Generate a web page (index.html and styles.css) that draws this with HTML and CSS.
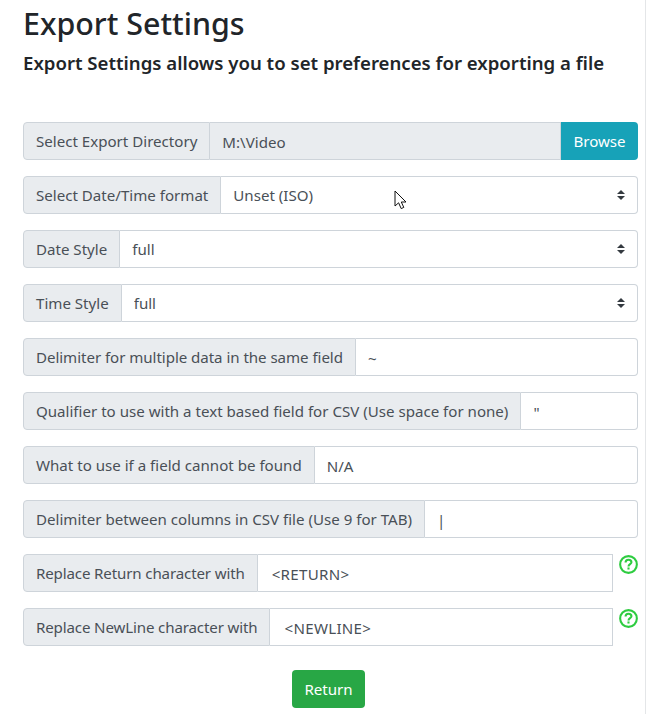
FILE: index.html
```html
<!DOCTYPE html>
<html lang="en">
<head>
    <meta charset="UTF-8">
    <meta name="viewport" content="width=device-width, initial-scale=1.0">
    <title>Export Settings</title>
    <link rel="stylesheet" href="styles.css">
</head>
<body>
    <div class="page">
        <h1>Export Settings</h1>
        <h2>Export Settings allows you to set preferences for exporting a file</h2>

        <form class="settings">
            <div class="group">
                <label class="addon">Select Export Directory</label>
                <input class="field field-readonly" type="text" value="M:\Video" readonly>
                <button class="browse" type="button">Browse</button>
            </div>
            <div class="group">
                <label class="addon">Select Date/Time format</label>
                <select class="field select"><option>Unset (ISO)</option></select>
            </div>
            <div class="group">
                <label class="addon">Date Style</label>
                <select class="field select"><option>full</option></select>
            </div>
            <div class="group">
                <label class="addon">Time Style</label>
                <select class="field select"><option>full</option></select>
            </div>
            <div class="group">
                <label class="addon addon-snug">Delimiter for multiple data in the same field</label>
                <input class="field" type="text" value="~">
            </div>
            <div class="group">
                <label class="addon">Qualifier to use with a text based field for CSV (Use space for none)</label>
                <input class="field" type="text" value="&quot;">
            </div>
            <div class="group">
                <label class="addon">What to use if a field cannot be found</label>
                <input class="field" type="text" value="N/A">
            </div>
            <div class="group">
                <label class="addon">Delimiter between columns in CSV file (Use 9 for TAB)</label>
                <input class="field" type="text" value="|">
            </div>
            <div class="group">
                <label class="addon addon-tight">Replace Return character with</label>
                <input class="field field-square field-spaced" type="text" value="&lt;RETURN&gt;">
                <svg class="help" viewBox="0 0 20 20">
                    <circle cx="10" cy="10" r="8.8" fill="none" stroke="#2ecc40" stroke-width="2.2"/>
                    <path d="M6.9 7.9C6.9 6.1 8.3 5 10 5S13.1 6.1 13.1 7.7C13.1 9.6 10 9.7 10 12" fill="none" stroke="#2ecc40" stroke-width="2.2"/>
                    <rect x="8.9" y="13.1" width="2.2" height="2.2" fill="#2ecc40"/>
                </svg>
            </div>
            <div class="group">
                <label class="addon addon-tight">Replace NewLine character with</label>
                <input class="field field-square field-spaced" type="text" value="&lt;NEWLINE&gt;">
                <svg class="help" viewBox="0 0 20 20">
                    <circle cx="10" cy="10" r="8.8" fill="none" stroke="#2ecc40" stroke-width="2.2"/>
                    <path d="M6.9 7.9C6.9 6.1 8.3 5 10 5S13.1 6.1 13.1 7.7C13.1 9.6 10 9.7 10 12" fill="none" stroke="#2ecc40" stroke-width="2.2"/>
                    <rect x="8.9" y="13.1" width="2.2" height="2.2" fill="#2ecc40"/>
                </svg>
            </div>
            <div class="actions">
                <button class="return" type="button">Return</button>
            </div>
        </form>
    </div>

    <svg class="pointer" viewBox="0 0 13 20">
        <path d="M1 1V16L4.6 12.8L7.2 18.6L9.8 17.4L7.3 12H12Z" fill="#fff" stroke="#111" stroke-width="1"/>
    </svg>
</body>
</html>
```

FILE: styles.css
```css
* {
    box-sizing: border-box;
}
body {
    font-family: 'Noto Sans', sans-serif;
    font-size: 15.1px;
    line-height: 1.5;
    color: #212529;
    background-color: #fff;
    margin: 0;
    height: 714px;
    overflow: hidden;
    border-right: 1px solid #e4e6e8;
}
.page {
    padding: 0 7px 0 23px;
}
h1 {
    font-size: 30.4px;
    font-weight: 500;
    line-height: 48px;
    margin: 0;
}
h2 {
    font-size: 18.6px;
    font-weight: 600;
    line-height: 28px;
    margin: 0;
    padding-top: 1px;
    white-space: nowrap;
}
.settings {
    margin-top: 45px;
}
.group {
    display: flex;
    height: 38px;
    margin-bottom: 16px;
}
.addon {
    display: flex;
    align-items: center;
    padding: 0 12px;
    color: #495057;
    background-color: #e9ecef;
    border: 1px solid #ced4da;
    border-radius: 4px 0 0 4px;
    white-space: nowrap;
}
.addon-snug {
    letter-spacing: -0.05px;
}
.addon-tight {
    letter-spacing: -0.14px;
}
.field {
    flex: 1;
    min-width: 0;
    height: 38px;
    padding: 1px 12px 0;
    font: inherit;
    color: #495057;
    background-color: #fff;
    border: 1px solid #ced4da;
    border-left: 0;
    border-radius: 0 4px 4px 0;
    outline: none;
}
.field-readonly {
    background-color: #e9ecef;
    border-radius: 0;
}
.field-square {
    border-radius: 0;
}
.field-spaced {
    padding-left: 14px;
    letter-spacing: 0.3px;
}
.select {
    appearance: none;
    background: #fff url("data:image/svg+xml,%3csvg xmlns='http://www.w3.org/2000/svg' viewBox='0 0 4 5'%3e%3cpath fill='%23343a40' d='M2 0L0 2h4zm0 5L0 3h4z'/%3e%3c/svg%3e") no-repeat right 12px center;
    background-size: 8px 10px;
}
.browse {
    width: 77px;
    font: inherit;
    color: #fff;
    background-color: #17a2b8;
    border: 0;
    border-radius: 0 4px 4px 0;
}
.help {
    flex: none;
    width: 19px;
    height: 19px;
    margin: 1px 0 0 6px;
}
.actions {
    display: flex;
    justify-content: center;
    padding: 8px 4px 0 0;
}
.return {
    width: 73px;
    height: 38px;
    font: inherit;
    color: #fff;
    background-color: #28a745;
    border: 0;
    border-radius: 4px;
}
.pointer {
    position: absolute;
    left: 394px;
    top: 190px;
    width: 13px;
    height: 20px;
}
```
